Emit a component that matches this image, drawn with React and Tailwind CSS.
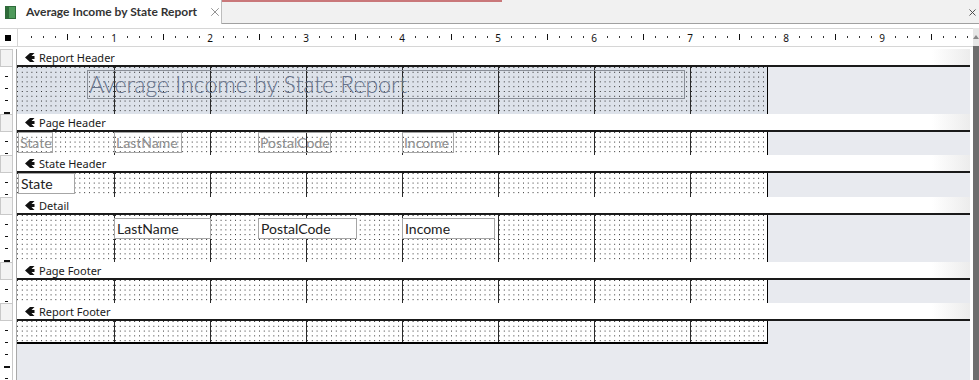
import React from "react";
import { X } from "lucide-react";

const DOTS =
  "bg-[conic-gradient(from_270deg_at_1px_1px,#222_90deg,transparent_0)] bg-[length:4.8px_4.8px]";

function SectionIcon() {
  return (
    <svg width="10" height="9" viewBox="0 0 10 9" className="shrink-0">
      <path d="M0 4.5 L5 0 L9.5 0 L6.5 3 L9.5 3 L9.5 6 L6.5 6 L9.5 9 L5 9 Z" fill="#111" />
    </svg>
  );
}

function VTicks({ h, list }) {
  const ticks = [];
  const items = list || [];
  if (!list) {
    for (let k = 0; 9 + 12 * k < h - 1; k++) items.push([9 + 12 * k, k % 4 === 3]);
  }
  items.forEach(([y, long], i) =>
    ticks.push(
      long ? (
        <rect key={i} x="4" y={y} width="6" height="2" fill="#111" />
      ) : (
        <rect key={i} x="5" y={y} width="3" height="1" fill="#111" />
      )
    )
  );
  return (
    <svg width="13" height={h} className="block">
      {ticks}
    </svg>
  );
}

function Cells({ h, tinted, bottom }) {
  const base = `${DOTS} ${tinted ? "bg-[#dde2ea]" : "bg-white"}`;
  const inner = [0, 1, 2, 3, 4, 5];
  return (
    <div className={`flex ${bottom ? "border-b-2 border-black" : ""}`} style={{ height: h }}>
      <div className={`w-[97px] h-full ${base}`} />
      {inner.map((i) => (
        <div key={i} className={`w-[96px] h-full border-l border-[#2a2a2a] ${base}`} />
      ))}
      <div className={`w-[78px] h-full border-l border-r border-l-[#2a2a2a] border-r-black ${base}`} />
    </div>
  );
}

function LeftRuler({ h, list, band = true }) {
  return (
    <div className="w-[17px] flex flex-col shrink-0">
      {band && (
        <div className="flex h-[18px]">
          <div className="w-[13px] h-full bg-[#f3f3f3] border border-[#c9c9c9]" />
          <div className="w-[3px]" />
          <div className="w-[1px] h-full bg-[#a9a9a9]" />
        </div>
      )}
      <div className="flex flex-1">
        <div className="w-[13px] border-r border-[#c9c9c9]">
          <VTicks h={h} list={list} />
        </div>
        <div className="w-[3px]" />
        <div className="w-[1px] bg-[#a9a9a9]" />
      </div>
    </div>
  );
}

function Section({ label, h, tinted, bottom, children }) {
  return (
    <div className="flex shrink-0">
      <LeftRuler h={h + (bottom ? 2 : 0)} />
      <div className="flex flex-col w-[953px]">
        <div className="h-[16px] flex items-center gap-[4px] pl-[8px] bg-[linear-gradient(to_right,#fff_96%,#ececec)]">
          <SectionIcon />
          <span className="text-[11px] leading-none text-[#1a1a1a] font-['Noto_Sans',sans-serif]">{label}</span>
        </div>
        <div className="h-[2px] bg-[#1a1a1a]" />
        <div className="flex flex-1 bg-[#e8eaef]">
          <div className="relative">
            <Cells h={h} tinted={tinted} bottom={bottom} />
            {children}
          </div>
          <div className="flex-1" />
        </div>
      </div>
    </div>
  );
}

const lbl =
  "absolute h-[21px] border border-[#a6a6a6] text-[14px] leading-[19px] text-[#8e8e8e] font-['Lato',sans-serif] pl-[1px] whitespace-nowrap";
const box =
  "absolute h-[21px] border border-[#a6a6a6] bg-white text-[14px] leading-[19px] text-[#222] font-['Lato',sans-serif] pl-[2px] whitespace-nowrap";

function Ruler() {
  const marks = [];
  for (let k = 1; k * 12 < 950; k++) {
    const x = k * 12;
    if (k % 8 === 0) {
      marks.push(
        <span
          key={k}
          className="absolute top-[3px] text-[10px] leading-[12px] text-[#111] font-['Noto_Sans',sans-serif] -translate-x-1/2"
          style={{ left: x }}
        >
          {k / 8}
        </span>
      );
    } else if (k % 4 === 0) {
      marks.push(<span key={k} className="absolute top-[5px] w-[1px] h-[6px] bg-[#111]" style={{ left: x + 1 }} />);
    } else {
      marks.push(<span key={k} className="absolute top-[7px] w-[1px] h-[2px] bg-[#333]" style={{ left: x + 1 }} />);
    }
  }
  return <div className="relative flex-1 h-full bg-white">{marks}</div>;
}

export default function App() {
  return (
    <div className="w-[979px] h-[380px] overflow-hidden bg-white flex flex-col font-['Noto_Sans',sans-serif]">
      {/* tab bar */}
      <div className="h-[24px] flex shrink-0">
        <div className="w-[222px] shrink-0 h-full bg-white flex items-center border-r border-[#bdbdbd]">
          <div className="ml-[5px] shrink-0 w-[11px] h-[13px] bg-[#4f9a5b] border border-[#2f6b3a] flex">
            <div className="w-[3px] h-full bg-[#2f6b3a]" />
          </div>
          <span className="ml-[10px] text-[12px] font-bold text-[#333] whitespace-nowrap font-['Lato',sans-serif]">
            Average Income by State Report
          </span>
          <X size={14} strokeWidth={1.2} color="#666" className="ml-[11px] shrink-0" />
        </div>
        <div className="flex-1 h-full bg-[#f1f1f1] border-b border-[#a0a0a0] flex flex-col">
          <div className="h-[2px] w-[280px] bg-[#c9787a]" />
          <div className="flex-1 flex items-center justify-end pr-[1px]">
            <X size={11} strokeWidth={2} color="#444" />
          </div>
        </div>
      </div>
      <div className="flex flex-1">
        <div className="w-[973px] flex flex-col">
          <div className="h-[4px]" />
          {/* ruler */}
          <div className="h-[19px] flex border-t border-b border-[#d6d6d6] shrink-0">
            <div className="w-[17px] flex items-center">
              <div className="ml-[5px] w-[6px] h-[6px] bg-black" />
            </div>
            <div className="w-[1px] bg-[#d6d6d6]" />
            <Ruler />
          </div>
          <div className="h-[2px]" />
          <Section label="Report Header" h={47} tinted>
            <div className="absolute left-[70px] top-[3px] w-[598px] h-[29px] border border-[#8a8f98] text-[23px] leading-[27px] font-light text-[#66728a] font-['Lato',sans-serif] pl-[1px] whitespace-nowrap">
              Average Income by State Report
            </div>
          </Section>
          <Section label="Page Header" h={23}>
            <div className={`${lbl} left-[1px] top-0 w-[35px]`}>State</div>
            <div className={`${lbl} left-[97px] top-0 w-[68px]`}>LastName</div>
            <div className={`${lbl} left-[241px] top-0 w-[73px]`}>PostalCode</div>
            <div className={`${lbl} left-[385px] top-0 w-[52px]`}>Income</div>
          </Section>
          <Section label="State Header" h={24}>
            <div className={`${box} left-[1px] top-0 w-[57px]`}>State</div>
          </Section>
          <Section label="Detail" h={47}>
            <div className={`${box} left-[97px] top-[3px] w-[97px]`}>LastName</div>
            <div className={`${box} left-[241px] top-[3px] w-[99px]`}>PostalCode</div>
            <div className={`${box} left-[385px] top-[3px] w-[93px]`}>Income</div>
          </Section>
          <Section label="Page Footer" h={23} />
          <Section label="Report Footer" h={23} bottom />
          <div className="flex flex-1">
            <LeftRuler band={false} h={40} list={[[8, false], [20, true], [32, false]]} />
            <div className="w-[953px] bg-[#e8eaef]" />
          </div>
        </div>
        <div className="w-[6px] flex flex-col">
          <div className="h-[4px] bg-white" />
          <div className="h-[18px] bg-[#e6e6e6] flex items-center justify-center">
            <div className="w-0 h-0 border-l-[3px] border-r-[3px] border-b-[4px] border-l-transparent border-r-transparent border-b-[#888]" />
          </div>
          <div className="flex-1 bg-[#6e6e6e]" />
        </div>
      </div>
    </div>
  );
}
